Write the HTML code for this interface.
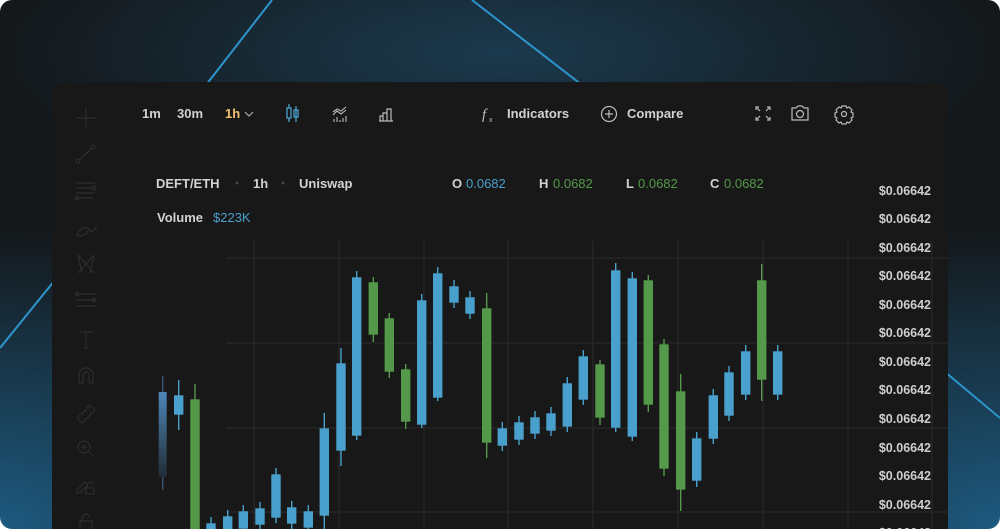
<!DOCTYPE html>
<html><head><meta charset="utf-8"><style>
html,body{margin:0;padding:0;background:#fff}
#wrap{position:relative;width:1000px;height:529px;overflow:hidden;border-radius:12px;
background:radial-gradient(ellipse 420px 300px at 0% 100%,#1d5a80 0%,rgba(29,90,128,0) 100%),radial-gradient(ellipse 420px 300px at 100% 100%,#1d5a80 0%,rgba(29,90,128,0) 100%),radial-gradient(ellipse 500px 160px at 50% 10%,#1b3a4e 0%,rgba(27,58,78,0) 100%),#14181b;
font-family:"Liberation Sans",sans-serif}
svg{position:absolute;left:0;top:0}
.t{fill:#d2d2d2;font-size:13px;font-weight:bold}
.p{fill:#cfcfcf;font-size:12.5px;font-weight:bold}
</style></head><body><div id="wrap">
<svg width="1000" height="529" viewBox="0 0 1000 529">
<g stroke="#2e94cc" stroke-width="2" fill="none">
<line x1="272" y1="0" x2="206" y2="85"/><line x1="472" y1="0" x2="582" y2="85"/>
<line x1="55" y1="280" x2="0" y2="348"/><line x1="945" y1="372" x2="1000" y2="418"/>
</g>
<rect x="52" y="82" width="896" height="470" rx="12" fill="#181818"/>
<g stroke="#262626" stroke-width="1.5">
<line x1="226" y1="258" x2="948" y2="258"/><line x1="226" y1="343" x2="948" y2="343"/>
<line x1="226" y1="428" x2="948" y2="428"/><line x1="226" y1="512" x2="948" y2="512"/>
<line x1="254" y1="241" x2="254" y2="529"/><line x1="339" y1="241" x2="339" y2="529"/>
<line x1="424" y1="241" x2="424" y2="529"/><line x1="508" y1="241" x2="508" y2="529"/>
<line x1="593" y1="241" x2="593" y2="529"/><line x1="678" y1="241" x2="678" y2="529"/>
<line x1="763" y1="241" x2="763" y2="529"/><line x1="848" y1="241" x2="848" y2="529"/>
<line x1="932" y1="241" x2="932" y2="529"/>
</g>
<g stroke="#2d2d2d" stroke-width="1.2" fill="none">
<path d="M86 108v20M76 118h20"/>
<circle cx="78" cy="161" r="2"/><circle cx="93" cy="147" r="2"/><path d="M79.5 159.5l12-11"/>
<path d="M76 183h19M76 188h17M76 193h19M76 198h17"/><circle cx="94" cy="188" r="2"/><circle cx="77" cy="198" r="2"/>
<path d="M77 235c3-7 8-9 12-6l-3 5c-3 2-6 2-9 1zM89 229l3 3 5-6"/>
<path d="M78 255l4 18M94 255l-4 18M78 255l16 18M94 255l-16 18"/>
<path d="M76 294h20M76 300h20M76 306h20"/><circle cx="77" cy="294" r="1.8"/><circle cx="94" cy="300" r="1.8"/>
<path d="M79 332h14M86 332v16M83 348h6"/>
<path d="M79 383v-8a7 7 0 0 1 14 0v8h-4v-8a3 3 0 0 0-6 0v8z"/>
<path d="M77 418l13-13 5 5-13 13zM82 413l2 2M85 410l2 2M88 407l2 2"/>
<circle cx="84" cy="447" r="6"/><path d="M84 444v6M81 447h6M88.5 451.5l4 4"/>
<path d="M77 490l8-8 3 3-8 8h-3z"/><rect x="86" y="488" width="8" height="6"/><path d="M87 488v-3a3 3 0 0 1 6 0"/>
<rect x="80" y="521" width="12" height="9"/><path d="M82 521v-3a4 4 0 0 1 8 0"/>
</g>
<text x="142" y="118" class="t">1m</text>
<text x="177" y="118" class="t">30m</text>
<text x="225" y="118" class="t" style="fill:#f2c46d">1h</text>
<path d="M245 112l4 4 4-4" stroke="#aaa" stroke-width="1.2" fill="none"/>
<g stroke="#4aa0cc" stroke-width="1.3" fill="none"><rect x="287" y="108" width="4" height="10"/><path d="M289 104v4M289 118v4M296 106v16"/><rect x="294" y="110" width="4" height="7"/></g>
<g stroke="#bbb" stroke-width="1.1" fill="none"><path d="M333 112l4-3 4 2 5-4M333 115l4-4 4 3 5-4M334 122v-3M337 122v-5M340 122v-2M343 122v-4M346 122v-6"/></g>
<g stroke="#bbb" stroke-width="1.2" fill="none"><path d="M379 121h14M380 121v-5h3v5M383 121v-8h4v8M387 121v-12h4v12"/></g>
<text x="482" y="119" fill="#bbb" font-size="15" font-style="italic" font-family="Liberation Serif,serif">f</text><text x="489" y="122" fill="#bbb" font-size="7">x</text>
<text x="507" y="118" class="t">Indicators</text>
<circle cx="609" cy="114" r="7.5" stroke="#bbb" stroke-width="1.2" fill="none"/><path d="M609 110v8M605 114h8" stroke="#bbb" stroke-width="1.2"/>
<text x="627" y="118" class="t">Compare</text>
<g stroke="#bbb" stroke-width="1.2" fill="none"><path d="M756 110v-3h3M770 110v-3h-3M756 117v3h3M770 117v3h-3M757 108l3 3M769 108l-3 3M757 119l3-3M769 119l-3-3"/>
<path d="M792 108h4l2-2h4l2 2h4v12h-16z"/><circle cx="800" cy="114" r="3.5"/>
<circle cx="844" cy="114" r="2.5"/><path d="M842 106h4l1 2 2-1 3 3-1 2 2 1v4l-2 1 1 2-3 3-2-1-1 2h-4l-1-2-2 1-3-3 1-2-2-1v-4l2-1-1-2 3-3 2 1z"/></g>
<text x="156" y="188" class="t">DEFT/ETH</text><circle cx="237" cy="183" r="1.5" fill="#444"/>
<text x="253" y="188" class="t">1h</text><circle cx="283" cy="183" r="1.5" fill="#444"/>
<text x="299" y="188" class="t">Uniswap</text>
<text x="452" y="188" class="t">O</text><text x="466" y="188" font-size="13" fill="#4aa0cc">0.0682</text>
<text x="539" y="188" class="t">H</text><text x="553" y="188" font-size="13" fill="#54994a">0.0682</text>
<text x="626" y="188" class="t">L</text><text x="638" y="188" font-size="13" fill="#54994a">0.0682</text>
<text x="710" y="188" class="t">C</text><text x="724" y="188" font-size="13" fill="#54994a">0.0682</text>
<text x="157" y="222" class="t">Volume</text><text x="213" y="222" font-size="13" fill="#4aa0cc">$223K</text>
<g text-anchor="end">
<text x="931" y="195" class="p">$0.06642</text><text x="931" y="223" class="p">$0.06642</text>
<text x="931" y="252" class="p">$0.06642</text><text x="931" y="280" class="p">$0.06642</text>
<text x="931" y="309" class="p">$0.06642</text><text x="931" y="337" class="p">$0.06642</text>
<text x="931" y="366" class="p">$0.06642</text><text x="931" y="394" class="p">$0.06642</text>
<text x="931" y="423" class="p">$0.06642</text><text x="931" y="452" class="p">$0.06642</text>
<text x="931" y="480" class="p">$0.06642</text><text x="931" y="509" class="p">$0.06642</text>
<text x="931" y="537" class="p">$0.06642</text>
</g>
<defs><linearGradient id="g1" x1="0" y1="0" x2="0" y2="1"><stop offset="0" stop-color="#4f86b8"/><stop offset="1" stop-color="#222c36"/></linearGradient></defs>
<g stroke-width="1.4">
<line x1="162.7" y1="376" x2="162.7" y2="490" stroke="#3b5670"/><rect x="158.7" y="392" width="8" height="85" fill="url(#g1)"/>
<g stroke="#4aa0cc" fill="#4aa0cc">
<line x1="178.7" y1="380" x2="178.7" y2="430"/><rect x="174.7" y="396" width="8" height="18"/>
<line x1="211" y1="517" x2="211" y2="529"/><rect x="207" y="524" width="8" height="6"/>
<line x1="227.7" y1="510" x2="227.7" y2="529"/><rect x="223.7" y="517" width="8" height="13"/>
<line x1="243.3" y1="505" x2="243.3" y2="529"/><rect x="239.3" y="512" width="8" height="16"/>
<line x1="260" y1="502" x2="260" y2="529"/><rect x="256" y="509" width="8" height="15"/>
<line x1="276" y1="468" x2="276" y2="523"/><rect x="272" y="475" width="8" height="42"/>
<line x1="291.7" y1="501" x2="291.7" y2="529"/><rect x="287.7" y="508" width="8" height="15"/>
<line x1="308.3" y1="505" x2="308.3" y2="529"/><rect x="304.3" y="512" width="8" height="15"/>
<line x1="324.3" y1="413" x2="324.3" y2="529"/><rect x="320.3" y="429" width="8" height="86"/>
<line x1="341" y1="348" x2="341" y2="466"/><rect x="337" y="364" width="8" height="86"/>
<line x1="356.7" y1="271" x2="356.7" y2="440"/><rect x="352.7" y="278" width="8" height="157"/>
<line x1="421.7" y1="294" x2="421.7" y2="428"/><rect x="417.7" y="301" width="8" height="123"/>
<line x1="437.7" y1="267" x2="437.7" y2="401"/><rect x="433.7" y="274" width="8" height="123"/>
<line x1="454" y1="280" x2="454" y2="308"/><rect x="450" y="287" width="8" height="15"/>
<line x1="470" y1="291" x2="470" y2="319"/><rect x="466" y="298" width="8" height="15"/>
<line x1="502.3" y1="422" x2="502.3" y2="451"/><rect x="498.3" y="429" width="8" height="16"/>
<line x1="519" y1="416" x2="519" y2="445"/><rect x="515" y="423" width="8" height="16"/>
<line x1="535" y1="411" x2="535" y2="439"/><rect x="531" y="418" width="8" height="15"/>
<line x1="551" y1="407" x2="551" y2="436"/><rect x="547" y="414" width="8" height="16"/>
<line x1="567.3" y1="377" x2="567.3" y2="432"/><rect x="563.3" y="384" width="8" height="42"/>
<line x1="583.3" y1="350" x2="583.3" y2="405"/><rect x="579.3" y="357" width="8" height="42"/>
<line x1="615.7" y1="263" x2="615.7" y2="432"/><rect x="611.7" y="271" width="8" height="156"/>
<line x1="632.3" y1="272" x2="632.3" y2="441"/><rect x="628.3" y="279" width="8" height="157"/>
<line x1="696.7" y1="432" x2="696.7" y2="487"/><rect x="692.7" y="439" width="8" height="41"/>
<line x1="713.3" y1="389" x2="713.3" y2="444"/><rect x="709.3" y="396" width="8" height="42"/>
<line x1="729" y1="366" x2="729" y2="421"/><rect x="725" y="373" width="8" height="42"/>
<line x1="745.7" y1="345" x2="745.7" y2="400"/><rect x="741.7" y="352" width="8" height="42"/>
<line x1="777.7" y1="345" x2="777.7" y2="400"/><rect x="773.7" y="352" width="8" height="42"/>
</g>
<g stroke="#54994a" fill="#54994a">
<line x1="195" y1="384" x2="195" y2="529"/><rect x="191" y="400" width="8" height="130"/>
<line x1="373.3" y1="277" x2="373.3" y2="342"/><rect x="369.3" y="283" width="8" height="51"/>
<line x1="389.3" y1="313" x2="389.3" y2="378"/><rect x="385.3" y="319" width="8" height="52"/>
<line x1="405.7" y1="364" x2="405.7" y2="429"/><rect x="401.7" y="370" width="8" height="51"/>
<line x1="486.7" y1="293" x2="486.7" y2="458"/><rect x="482.7" y="309" width="8" height="133"/>
<line x1="600" y1="360" x2="600" y2="425"/><rect x="596" y="365" width="8" height="52"/>
<line x1="648.3" y1="275" x2="648.3" y2="412"/><rect x="644.3" y="281" width="8" height="123"/>
<line x1="664" y1="339" x2="664" y2="476"/><rect x="660" y="345" width="8" height="123"/>
<line x1="680.7" y1="374" x2="680.7" y2="511"/><rect x="676.7" y="392" width="8" height="97"/>
<line x1="761.7" y1="264" x2="761.7" y2="401"/><rect x="757.7" y="281" width="8" height="98"/>
</g>
</g>
</svg>
</div></body></html>
